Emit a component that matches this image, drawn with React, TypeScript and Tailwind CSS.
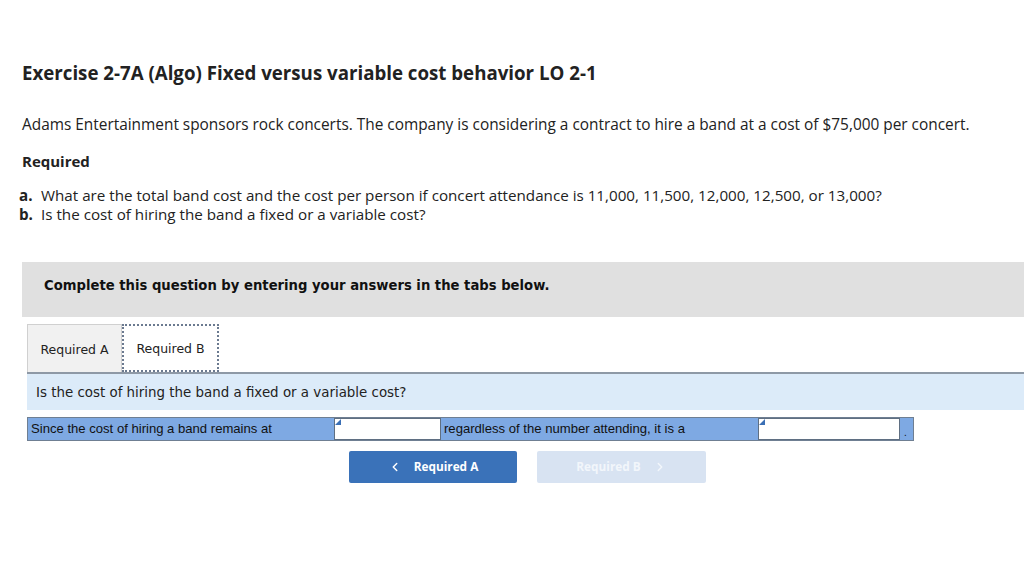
import { ChevronLeft, ChevronRight } from "lucide-react";

const proxima = "font-['Open_Sans',sans-serif]";
const verdana = "font-['DejaVu_Sans',Verdana,sans-serif]";
const arial = "font-['Liberation_Sans',Arial,sans-serif]";

function Blank() {
  return (
    <div className="relative h-full border border-[#5f6f82] bg-white">
      <span className="absolute left-0 top-0 h-0 w-0 border-l-[6px] border-t-[6px] border-l-transparent border-t-[#3a6fb5] rotate-90" />
    </div>
  );
}

export default function App() {
  return (
    <div className="h-[566px] w-[1024px] overflow-hidden bg-white text-[#222]">
      <div className={`${proxima} pl-[22px] pt-[61px]`}>
        <h1 className="text-[18.7px] font-bold leading-[24px] text-[#222]">
          Exercise 2-7A (Algo) Fixed versus variable cost behavior LO 2-1
        </h1>
        <p className="mt-[30px] text-[15.4px] leading-[20px]">
          Adams Entertainment sponsors rock concerts. The company is considering a contract to hire a band at a cost of $75,000 per concert.
        </p>
        <h2 className="mt-[16px] text-[15px] font-bold leading-[20px]">Required</h2>
        <div className="-ml-[3px] mt-[15px] text-[15.2px] leading-[19px]">
          <div className="flex">
            <span className="w-[22px] font-bold">a.</span>
            <span>What are the total band cost and the cost per person if concert attendance is 11,000, 11,500, 12,000, 12,500, or 13,000?</span>
          </div>
          <div className="flex">
            <span className="w-[22px] font-bold">b.</span>
            <span>Is the cost of hiring the band a fixed or a variable cost?</span>
          </div>
        </div>
      </div>

      <div className="ml-[22px] mt-[38px] flex h-[55px] items-center bg-[#e0e0e0] pb-[7px] pl-[22px]">
        <p className={`${verdana} text-[13.2px] font-bold text-[#111]`}>
          Complete this question by entering your answers in the tabs below.
        </p>
      </div>

      <div className={`${verdana} ml-[27px] mt-[7px]`}>
        <div className="flex h-[48px] items-stretch">
          <div className="flex w-[95px] items-center justify-center border border-b-0 border-[#d0d0d0] bg-[#f1f1f1] pt-[3px] text-[12.5px] text-[#222]">
            Required A
          </div>
          <div className="flex w-[97px] items-center justify-center border-2 border-dotted border-[#6b7a90] bg-white pt-[3px] text-[12.5px] text-[#222]">
            Required B
          </div>
        </div>
        <div className="flex h-[38px] items-center border-t-2 border-[#8e99a6] bg-[#dcebf9] pl-[9px] pt-[2px] text-[13.4px] text-[#222]">
          Is the cost of hiring the band a fixed or a variable cost?
        </div>

        <div className={`${arial} mt-[7px] flex h-[24px] w-[887px] border border-[#6f7f92] bg-[#7ea9e3] text-[13.1px] text-[#111]`}>
          <div className="flex w-[306px] items-center pl-[3px]">Since the cost of hiring a band remains at</div>
          <div className="w-[107px]"><Blank /></div>
          <div className="flex w-[317px] items-center pl-[3px]">regardless of the number attending, it is a</div>
          <div className="w-[142px]"><Blank /></div>
          <div className="flex flex-1 items-end pb-[2px] pl-[4px] text-[10px] leading-none">.</div>
        </div>

        <div className={`${proxima} ml-[322px] mt-[10px] flex gap-[20px]`}>
          <div className="flex h-[32px] w-[168px] items-center justify-center gap-[12px] rounded-[2px] bg-[#3a72b9] text-[11.8px] font-bold text-white">
            <ChevronLeft size={14} strokeWidth={2.5} />
            <span>Required A</span>
          </div>
          <div className="flex h-[32px] w-[169px] items-center justify-center gap-[12px] rounded-[2px] bg-[#d8e3f2] text-[11.8px] font-bold text-[#f2f6fb]">
            <span>Required B</span>
            <ChevronRight size={14} strokeWidth={2.5} />
          </div>
        </div>
      </div>
    </div>
  );
}
